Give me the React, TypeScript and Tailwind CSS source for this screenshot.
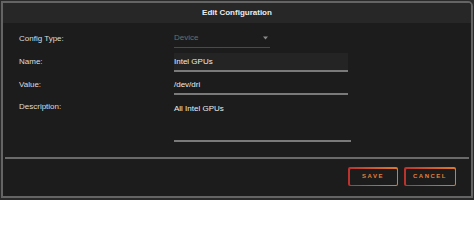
import React from "react";

export default function App() {
  const font = { fontFamily: '"Liberation Sans", Arial, sans-serif' };
  return (
    <div className="w-[474px] h-[200px] bg-[#2a2a2a] p-[1px]" style={font}>
      <div className="h-[197px] flex flex-col border-2 border-[#646464] rounded-tr-[5px] bg-[#1c1c1c] overflow-hidden">
        {/* Header */}
        <div className="h-[20px] shrink-0 bg-[#272727] flex items-center justify-center">
          <span className="text-[8px] font-bold text-[#ececec]">Edit Configuration</span>
        </div>

        {/* Form rows */}
        <div className="flex flex-col pl-[16px] text-[8px]">
          <div className="flex mt-[6px] h-[19px]">
            <div className="w-[155px] leading-[19px] text-[#dcdcdc]">Config Type:</div>
            <div className="w-[96px] h-[19px] flex items-center justify-between border-b border-[#4a4a4a] text-[#6e6e6e]">
              <span>Device</span>
              <svg width="5" height="4" viewBox="0 0 5 4" className="mr-[2px]">
                <path d="M0 0.5 L5 0.5 L2.5 3.5 Z" fill="#8a8a8a" />
              </svg>
            </div>
          </div>

          <div className="flex mt-[5px] h-[19px]">
            <div className="w-[155px] leading-[17px] text-[#dcdcdc]">Name:</div>
            <div className="w-[174px] h-[19px] bg-[#242424] border-b-2 border-[#7a7a7a] flex items-center text-[#ededed]">
              Intel GPUs
            </div>
          </div>

          <div className="flex mt-[4px] h-[19px]">
            <div className="w-[155px] leading-[17px] text-[#dcdcdc]">Value:</div>
            <div className="w-[174px] h-[19px] border-b-2 border-[#7a7a7a] flex items-center text-[#ededed]">
              /dev/dri
            </div>
          </div>

          <div className="flex mt-[3px] h-[44px]">
            <div className="w-[155px] pt-[3px] text-[#dcdcdc]">Description:</div>
            <div className="w-[177px] h-[44px] border-b-2 border-[#7a7a7a] pt-[5px] text-[#ededed]">
              All Intel GPUs
            </div>
          </div>
        </div>

        <div className="flex-1" />

        {/* Divider */}
        <div className="h-[2px] mx-[2px] bg-[#6a6a6a] shrink-0" />

        {/* Actions */}
        <div className="h-[37px] shrink-0 flex items-center justify-end gap-[6px] pr-[15px] pb-[2px]">
          <button className="w-[50px] h-[19px] rounded-[2px] p-[1.5px] bg-gradient-to-r from-[#b8322e] to-[#e0782c]">
            <span className="w-full h-full flex items-center justify-center rounded-[1px] bg-[#1c1c1c] text-[6px] font-bold tracking-[1.5px] text-[#e0823a]">
              SAVE
            </span>
          </button>
          <button className="w-[52px] h-[19px] rounded-[2px] p-[1.5px] bg-gradient-to-r from-[#b8322e] to-[#e0782c]">
            <span className="w-full h-full flex items-center justify-center rounded-[1px] bg-[#1c1c1c] text-[6px] font-bold tracking-[1.5px] text-[#e0823a]">
              CANCEL
            </span>
          </button>
        </div>
      </div>
    </div>
  );
}
